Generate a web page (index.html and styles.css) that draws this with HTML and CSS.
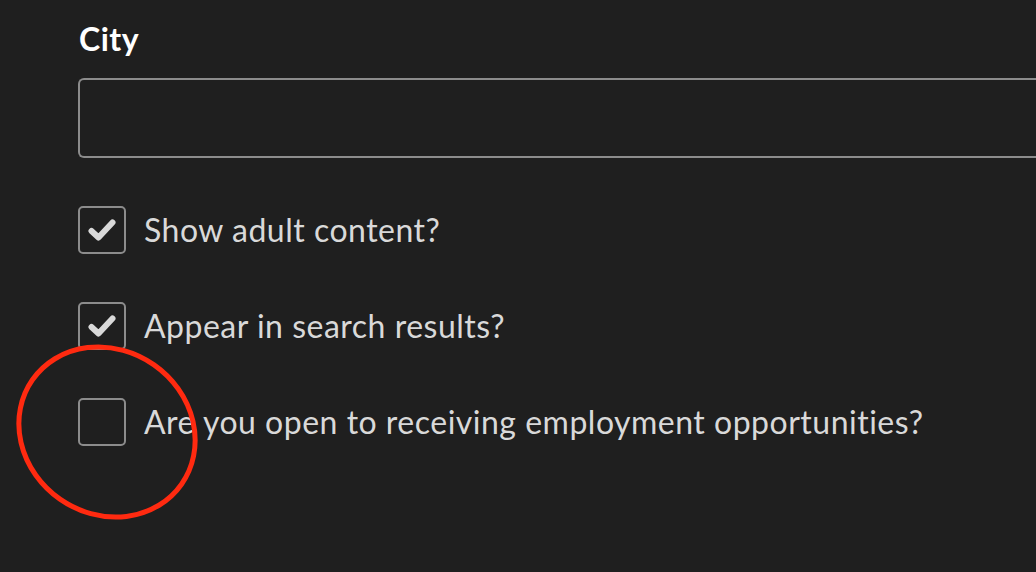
FILE: index.html
```html
<!DOCTYPE html>
<html lang="en">
<head>
<meta charset="utf-8">
<title>Profile settings</title>
<link rel="stylesheet" href="styles.css">
</head>
<body>
<main class="form">
  <label class="field-label" for="city">City</label>
  <input class="text-input" id="city" type="text">
  <div class="checks">
    <label class="check">
      <span class="box">
        <svg class="tick" viewBox="0 0 28 22" width="28" height="22"><path d="M3.5 12 L10.5 18.5 L24.5 3.5" fill="none" stroke="#d9d9d9" stroke-width="6" stroke-linecap="round" stroke-linejoin="round"/></svg>
      </span>
      <span class="check-text">Show adult content?</span>
    </label>
    <label class="check">
      <span class="box">
        <svg class="tick" viewBox="0 0 28 22" width="28" height="22"><path d="M3.5 12 L10.5 18.5 L24.5 3.5" fill="none" stroke="#d9d9d9" stroke-width="6" stroke-linecap="round" stroke-linejoin="round"/></svg>
      </span>
      <span class="check-text">Appear in search results?</span>
    </label>
    <label class="check">
      <span class="box"></span>
      <span class="check-text">Are you open to receiving employment opportunities?</span>
    </label>
  </div>
  <svg class="annotation" width="220" height="200" viewBox="0 0 220 200">
    <ellipse cx="110" cy="100" rx="91" ry="82" transform="rotate(35 110 100)" fill="none" stroke="#ff2a10" stroke-width="5"/>
  </svg>
</main>
</body>
</html>
```
FILE: styles.css
```css
html, body {
  margin: 0;
  padding: 0;
  background: #1f1f1f;
  overflow: hidden;
}
body {
  width: 1036px;
  height: 572px;
  font-family: "Lato", "Noto Sans", sans-serif;
  color: #d9d9d9;
}
.form {
  position: relative;
  padding: 20px 0 0 78px;
  display: flex;
  flex-direction: column;
  align-items: flex-start;
}
.field-label {
  font-size: 32px;
  font-weight: 700;
  letter-spacing: 0.5px;
  color: #ffffff;
  line-height: 38px;
  margin-left: 1px;
}
.text-input {
  box-sizing: border-box;
  margin-top: 20px;
  width: 958px;
  margin-right: -100px;
  flex: none;
  height: 80px;
  background: transparent;
  border: 2px solid #8c8c8c;
  border-right: none;
  border-radius: 6px 0 0 6px;
  outline: none;
}
.checks {
  margin-top: 48px;
  display: flex;
  flex-direction: column;
  gap: 48px;
}
.check {
  display: flex;
  align-items: center;
  gap: 18px;
  height: 48px;
}
.box {
  box-sizing: border-box;
  width: 48px;
  height: 48px;
  border: 2px solid #8c8c8c;
  border-radius: 5px;
  display: flex;
  align-items: center;
  justify-content: center;
}
.check-text {
  font-size: 32px;
  letter-spacing: 0.5px;
  line-height: 48px;
  color: #d9d9d9;
}
.annotation {
  position: absolute;
  left: -3px;
  top: 332px;
}
```
